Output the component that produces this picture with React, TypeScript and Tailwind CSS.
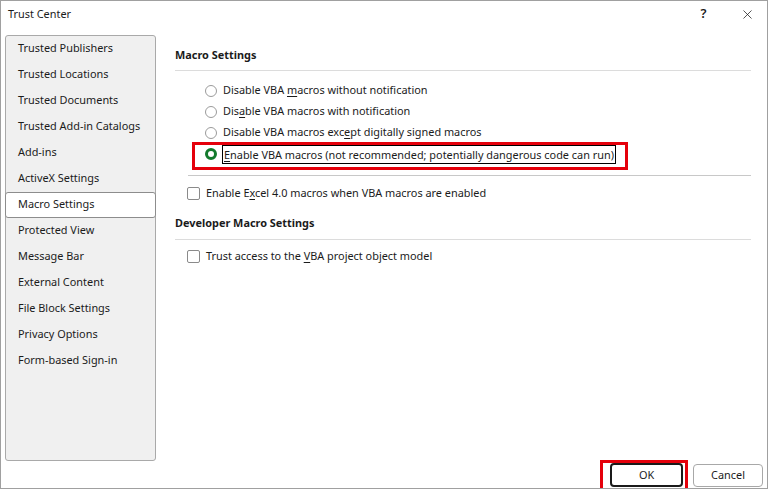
import { X } from "lucide-react";

const navItems = [
  "Trusted Publishers",
  "Trusted Locations",
  "Trusted Documents",
  "Trusted Add-in Catalogs",
  "Add-ins",
  "ActiveX Settings",
  "Macro Settings",
  "Protected View",
  "Message Bar",
  "External Content",
  "File Block Settings",
  "Privacy Options",
  "Form-based Sign-in",
];

const Radio = ({ checked }: { checked?: boolean }) =>
  checked ? (
    <span className="w-[12px] h-[12px] rounded-full border-[3px] border-[#137a2c] bg-white shrink-0" />
  ) : (
    <span className="w-[12px] h-[12px] rounded-full border border-[#9b9b9b] bg-white shrink-0" />
  );

const Checkbox = () => (
  <span className="w-[13px] h-[13px] rounded-[2px] border border-[#8a8a8a] bg-white shrink-0" />
);

// underlined access key letter
const U = ({ children }: { children: string }) => <span className="underline underline-offset-2">{children}</span>;

export default function App() {
  return (
    <div
      className="w-[768px] h-[489px] bg-white border border-[#a0a0a0] text-[10.9px] text-[#1b1b1b] flex flex-col overflow-hidden"
      style={{ fontFamily: '"Noto Sans", "Open Sans", sans-serif' }}
    >
      {/* title bar */}
      <div className="h-[34px] flex items-center pl-[7px] shrink-0">
        <span className="flex-1 -mt-[8px]">Trust Center</span>
        <span className="w-[43px] text-center -mt-[8px] text-[13px] font-semibold">?</span>
        <span className="w-[44px] flex justify-center -mt-[8px] -mr-[2px]">
          <X size={15} strokeWidth={1.2} />
        </span>
      </div>

      <div className="flex flex-1 min-h-0">
        {/* category list */}
        <div className="ml-[4px] w-[151px] h-[426px] bg-[#f0f0f0] border border-[#a9a9a9] rounded-[3px] flex flex-col shrink-0">
          {navItems.map((item) => (
            <div
              key={item}
              className={
                item === "Macro Settings"
                  ? "h-[26px] -mx-px flex items-center pl-[12px] pb-px bg-white border border-[#8d8d8d] rounded-[3px]"
                  : "h-[26px] flex items-center pl-[12px] pb-[2px]"
              }
            >
              {item}
            </div>
          ))}
        </div>

        {/* settings pane */}
        <div className="flex-1 pl-[19px] pr-[16px] flex flex-col relative">
          <div className="h-[20px] mt-[10px] flex items-center font-bold">Macro Settings</div>
          <div className="h-px mt-[5px] bg-[#dcdcdc]" />

          <div className="mt-[9px] flex flex-col pl-[30px]">
            <label className="h-[21px] flex items-center gap-[6px]">
              <Radio />
              <span>Disable VBA <U>m</U>acros without notification</span>
            </label>
            <label className="h-[21px] flex items-center gap-[6px]">
              <Radio />
              <span>Dis<U>a</U>ble VBA macros with notification</span>
            </label>
            <label className="h-[21px] flex items-center gap-[6px]">
              <Radio />
              <span>Disable VBA macros exc<U>e</U>pt digitally signed macros</span>
            </label>
            <label className="h-[22px] flex items-center gap-[5px] relative">
              <Radio checked />
              <span className="border border-black px-px leading-[17px]">
                <U>E</U>nable VBA macros (not recommended; potentially dangerous code can run)
              </span>
              <span className="absolute -left-[13px] top-[-1px] w-[436px] h-[28px] border-[3px] border-[#e5000b] pointer-events-none" />
            </label>
          </div>

          <div className="h-px mt-[10px] ml-[13px] bg-[#c8c8c8]" />

          <label className="h-[21px] mt-[7px] ml-[12px] flex items-center gap-[6px]">
            <Checkbox />
            <span>Enable E<U>x</U>cel 4.0 macros when VBA macros are enabled</span>
          </label>

          <div className="h-[20px] mt-[9px] flex items-center font-bold">Developer Macro Settings</div>
          <div className="h-px mt-[6px] bg-[#dcdcdc]" />

          <label className="h-[21px] mt-[6px] ml-[12px] flex items-center gap-[6px]">
            <Checkbox />
            <span>Trust access to the <U>V</U>BA project object model</span>
          </label>

          {/* dialog buttons */}
          <div className="mt-auto mb-[1px] flex justify-end gap-[10px] -mr-[12px]">
            <div className="relative">
              <button className="w-[73px] h-[24px] bg-white border-2 border-[#1a1a1a] rounded-[4px]">OK</button>
              <span className="absolute -left-[10px] -top-[3px] w-[88px] h-[32px] border-[3px] border-[#e5000b]" />
            </div>
            <button className="w-[70px] h-[23px] mt-[1px] bg-white border border-[#a8a8a8] rounded-[4px]">Cancel</button>
          </div>
        </div>
      </div>
    </div>
  );
}
